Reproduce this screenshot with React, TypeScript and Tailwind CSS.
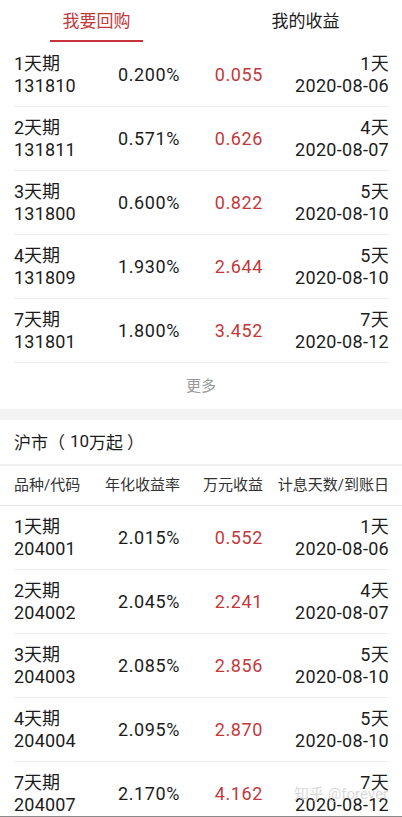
import React from 'react';

type Row = { name: string; code: string; rate: string; gain: string; days: string; date: string };

const myRows: Row[] = [
  { name: '1天期', code: '131810', rate: '0.200%', gain: '0.055', days: '1天', date: '2020-08-06' },
  { name: '2天期', code: '131811', rate: '0.571%', gain: '0.626', days: '4天', date: '2020-08-07' },
  { name: '3天期', code: '131800', rate: '0.600%', gain: '0.822', days: '5天', date: '2020-08-10' },
  { name: '4天期', code: '131809', rate: '1.930%', gain: '2.644', days: '5天', date: '2020-08-10' },
  { name: '7天期', code: '131801', rate: '1.800%', gain: '3.452', days: '7天', date: '2020-08-12' },
];

const shRows: Row[] = [
  { name: '1天期', code: '204001', rate: '2.015%', gain: '0.552', days: '1天', date: '2020-08-06' },
  { name: '2天期', code: '204002', rate: '2.045%', gain: '2.241', days: '4天', date: '2020-08-07' },
  { name: '3天期', code: '204003', rate: '2.085%', gain: '2.856', days: '5天', date: '2020-08-10' },
  { name: '4天期', code: '204004', rate: '2.095%', gain: '2.870', days: '5天', date: '2020-08-10' },
  { name: '7天期', code: '204007', rate: '2.170%', gain: '4.162', days: '7天', date: '2020-08-12' },
];

const font = { fontFamily: 'Roboto, "Noto Sans CJK SC", sans-serif' };

function RateRow({ row }: { row: Row }) {
  return (
    <div className="mx-[14px] mr-[13px] h-[64px] border-b border-[#ececec] grid grid-cols-[86px_80px_83px_1fr] items-center text-[18px] leading-[22px] text-[#1c1c1c]">
      <div>
        <div>{row.name}</div>
        <div className="tracking-[0.2px]">{row.code}</div>
      </div>
      <div className="text-right tracking-[0.6px]">{row.rate}</div>
      <div className="text-right tracking-[0.6px] text-[#c3393b]">{row.gain}</div>
      <div className="text-right tracking-[0.3px]">
        <div>{row.days}</div>
        <div>{row.date}</div>
      </div>
    </div>
  );
}

export default function App() {
  return (
    <div className="relative w-[402px] h-[817px] overflow-hidden bg-white" style={font}>
      {/* tabs */}
      <div className="flex h-[43px]">
        <div className="ml-[50px] w-[93px] flex flex-col items-center">
          <span className="mt-[9px] text-[17px] leading-[24px] text-[#c3393b]">我要回购</span>
          <span className="mt-auto mb-[1px] h-[2px] w-full bg-[#c7353a]" />
        </div>
        <div className="ml-[116px] w-[93px] flex flex-col items-center">
          <span className="mt-[9px] text-[17px] leading-[24px] text-[#1c1c1c]">我的收益</span>
        </div>
      </div>

      {myRows.map((r) => (
        <RateRow key={r.code} row={r} />
      ))}

      <div className="h-[46px] flex items-center justify-center text-[15px] text-[#9a9a9a]">更多</div>

      <div className="h-[11px] bg-[#f3f3f3]" />

      <div
        className="h-[46px] flex items-center px-[14px] text-[17px] text-[#1c1c1c] border-b-2 border-[#f0f0f0] [text-spacing-trim:space-all]"
        style={{ fontFamily: '"Noto Sans CJK SC", sans-serif' }}
      >
        <span>沪市（</span>
        <span className="ml-[5px]" style={font}>10</span>
        <span>万起</span>
        <span className="ml-[4px]">）</span>
      </div>

      <div className="h-[40px] border-b border-[#e6e6e6] grid grid-cols-[86px_80px_83px_1fr] items-center pl-[14px] pr-[13px] text-[15px] text-[#333]">
        <div>品种/代码</div>
        <div className="text-right">年化收益率</div>
        <div className="text-right">万元收益</div>
        <div className="text-right">计息天数/到账日</div>
      </div>

      {shRows.map((r) => (
        <RateRow key={r.code} row={r} />
      ))}

      {/* watermark */}
      <div className="absolute right-[14px] bottom-[12px] text-[15px] text-[#d0d0d0]/80 pointer-events-none">
        知乎 @forever
      </div>
      <div className="absolute left-0 right-0 bottom-0 h-px bg-[#8a8a8a]" />
    </div>
  );
}
